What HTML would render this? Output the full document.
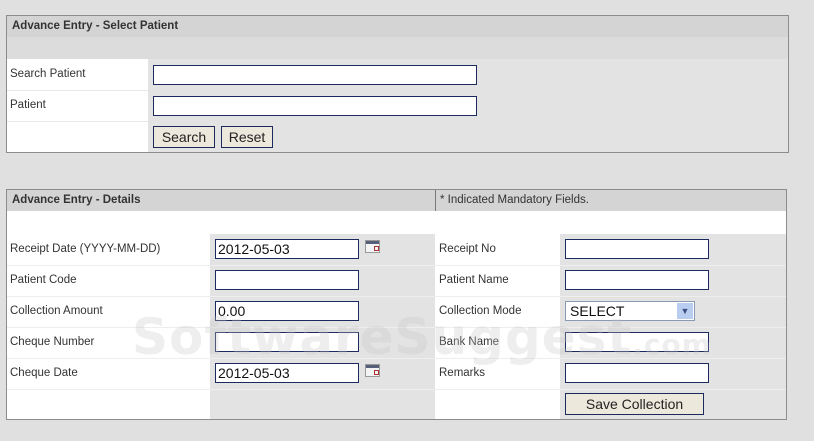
<!DOCTYPE html>
<html><head><style>
*{margin:0;padding:0;box-sizing:border-box}
body{width:814px;height:441px;background:#e0e0e0;font-family:"Liberation Sans",Arial,sans-serif;font-size:11.5px;color:#333;position:relative;overflow:hidden}
.a{position:absolute}
.hd{background:#d4d4d4;font-weight:bold;color:#333;padding:4px 0 0 5px;font-size:11.5px}
.w{background:#fff}
.lb{position:absolute;font-size:11.5px;color:#333}
.in{position:absolute;background:#fff;border:1px solid #1c2a5e;height:20px;font-family:"Liberation Sans",Arial,sans-serif;font-size:14px;color:#111;padding:1px 2px;line-height:17px}
.bt{position:absolute;background:#ede8dc;border:1px solid #1c2a5e;height:22px;font-family:"Liberation Sans",Arial,sans-serif;font-size:14px;color:#222;text-align:center;line-height:20px}
.sep{position:absolute;height:1px;background:#eeeeee}
.cal{position:absolute;width:15px;height:13px;border:1px solid #999;background:#f4f4f4}
.cal:before{content:"";position:absolute;left:0;top:0;right:0;height:3px;background:#56607a}
.cal:after{content:"";position:absolute;left:8px;top:5px;width:3px;height:3px;border:1px solid #a33}
</style></head><body>
<div class="a" style="left:6px;top:15px;width:783px;height:138px;border:1px solid #8c8c8c;background:#e3e3e3"></div>
<div class="a hd" style="left:7px;top:16px;width:781px;height:21px">Advance Entry - Select Patient</div>
<div class="a" style="left:7px;top:37px;width:781px;height:22px;background:#dcdcdc"></div>
<div class="a w" style="left:7px;top:59px;width:141px;height:93px"></div>
<div class="sep" style="left:7px;top:90px;width:141px;background:#e8e8e8"></div>
<div class="sep" style="left:7px;top:121px;width:141px;background:#e8e8e8"></div>
<div class="lb" style="left:10px;top:68px">Search Patient</div>
<div class="lb" style="left:10px;top:99px">Patient</div>
<div class="in" style="left:153px;top:65px;width:324px"></div>
<div class="in" style="left:153px;top:96px;width:324px"></div>
<div class="bt" style="left:153px;top:126px;width:62px">Search</div>
<div class="bt" style="left:221px;top:126px;width:52px">Reset</div>

<div class="a" style="left:6px;top:189px;width:781px;height:231px;border:1px solid #8c8c8c;background:#e3e3e3"></div>
<div class="a hd" style="left:7px;top:190px;width:428px;height:21px">Advance Entry - Details</div>
<div class="a" style="left:435px;top:190px;width:351px;height:21px;background:#d4d4d4;border-left:1px solid #777;padding:4px 0 0 4px;font-size:11.5px;color:#333">* Indicated Mandatory Fields.</div>
<div class="a w" style="left:7px;top:211px;width:779px;height:23px"></div>
<div class="a w" style="left:7px;top:234px;width:203px;height:185px"></div>
<div class="a w" style="left:435px;top:234px;width:125px;height:185px"></div>
<div class="sep" style="left:7px;top:265px;width:779px"></div>
<div class="sep" style="left:7px;top:296px;width:779px"></div>
<div class="sep" style="left:7px;top:327px;width:779px"></div>
<div class="sep" style="left:7px;top:358px;width:779px"></div>
<div class="sep" style="left:7px;top:389px;width:779px"></div>

<div class="lb" style="left:10px;top:243px">Receipt Date (YYYY-MM-DD)</div>
<div class="lb" style="left:10px;top:274px">Patient Code</div>
<div class="lb" style="left:10px;top:305px">Collection Amount</div>
<div class="lb" style="left:10px;top:336px">Cheque Number</div>
<div class="lb" style="left:10px;top:367px">Cheque Date</div>
<div class="in" style="left:215px;top:239px;width:144px">2012-05-03</div>
<div class="in" style="left:215px;top:270px;width:144px"></div>
<div class="in" style="left:215px;top:301px;width:144px">0.00</div>
<div class="in" style="left:215px;top:332px;width:144px"></div>
<div class="in" style="left:215px;top:363px;width:144px">2012-05-03</div>
<div class="cal" style="left:365px;top:240px"></div>
<div class="cal" style="left:365px;top:364px"></div>

<div class="lb" style="left:439px;top:243px">Receipt No</div>
<div class="lb" style="left:439px;top:274px">Patient Name</div>
<div class="lb" style="left:439px;top:305px">Collection Mode</div>
<div class="lb" style="left:439px;top:336px">Bank Name</div>
<div class="lb" style="left:439px;top:367px">Remarks</div>
<div class="in" style="left:565px;top:239px;width:144px"></div>
<div class="in" style="left:565px;top:270px;width:144px"></div>
<div class="in" style="left:565px;top:301px;width:130px;border-color:#8a9ab5;padding-left:4px">SELECT</div>
<div class="a" style="left:677px;top:303px;width:16px;height:16px;background:#b9cdf0;color:#3a4f80;font-size:9px;text-align:center;line-height:16px">&#9660;</div>
<div class="in" style="left:565px;top:332px;width:144px"></div>
<div class="in" style="left:565px;top:363px;width:144px"></div>
<div class="bt" style="left:565px;top:393px;width:139px">Save Collection</div>

<div class="a" style="left:132px;top:308px;font-family:'DejaVu Sans',sans-serif;font-weight:bold;font-size:50px;color:rgba(200,200,200,0.3);letter-spacing:1px">SoftwareSuggest<span style="font-size:28px">.com</span></div>
</body></html>
